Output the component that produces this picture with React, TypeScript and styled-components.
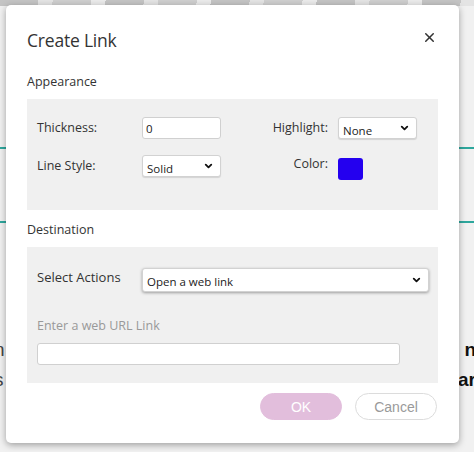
import React from "react";
import styled, { createGlobalStyle } from "styled-components";
import { ChevronDown, X } from "lucide-react";

const GlobalStyle = createGlobalStyle`
  html, body {
    margin: 0;
    padding: 0;
    background: #eeeeee;
  }
  * {
    box-sizing: border-box;
  }
`;

const CreateLinkDialog = () => {
  return (
    <Page>
      <GlobalStyle />
      <Backdrop>
        <TopStripe />
        <TealLine $top={141} />
        <TealLine $top={72} />
        <BackRow $top={117}>
          <BackLetter>n</BackLetter>
          <BackLetter $bold>n</BackLetter>
        </BackRow>
        <BackRow $top={10}>
          <BackLetter>s</BackLetter>
          <BackLetter $bold>ar</BackLetter>
        </BackRow>
      </Backdrop>

      <Dialog>
        <Header>
          <Title>Create Link</Title>
          <CloseButton>
            <X size={15} strokeWidth={2.4} />
          </CloseButton>
        </Header>

        <SectionLabel $top={21}>Appearance</SectionLabel>
        <Panel $pad="18px 21px 33px 10px">
          <AppearanceGrid>
            <Label>Thickness:</Label>
            <TextInput defaultValue="0" $w={79} $h={22} />
            <Label $right>Highlight:</Label>
            <SelectBox $w={79}>
              <Select defaultValue="None">
                <option>None</option>
              </Select>
              <Arrow>
                <ChevronDown size={11} strokeWidth={4} />
              </Arrow>
            </SelectBox>

            <Label>Line Style:</Label>
            <SelectBox $w={79}>
              <Select defaultValue="Solid">
                <option>Solid</option>
              </Select>
              <Arrow>
                <ChevronDown size={11} strokeWidth={4} />
              </Arrow>
            </SelectBox>
            <Label $right $up>Color:</Label>
            <Swatch $color="#2400ef" />
          </AppearanceGrid>
        </Panel>

        <SectionLabel $top={11}>Destination</SectionLabel>
        <Panel $pad="21px 9px 18px 10px">
          <ActionRow>
            <Label $big>Select Actions</Label>
            <SelectBox $w={287} $h={24} $shadow>
              <Select defaultValue="web">
                <option value="web">Open a web link</option>
              </Select>
              <Arrow>
                <ChevronDown size={11} strokeWidth={4} />
              </Arrow>
            </SelectBox>
          </ActionRow>
          <Hint>Enter a web URL Link</Hint>
          <TextInput $w={363} $h={22} />
        </Panel>

        <Footer>
          <PillButton $primary>OK</PillButton>
          <PillButton>Cancel</PillButton>
        </Footer>
      </Dialog>
    </Page>
  );
};

export default CreateLinkDialog;

const Page = styled.div`
  position: relative;
  width: 474px;
  height: 452px;
  overflow: hidden;
  background: #eeeeee;
  font-family: "Open Sans", "Noto Sans", sans-serif;
`;

const Backdrop = styled.div`
  display: flex;
  flex-direction: column;
  width: 100%;
  height: 100%;
  background: #f1f1f1;
`;

const TopStripe = styled.div`
  height: 6px;
  background: repeating-linear-gradient(
    100deg,
    #c4c4c4 0 38px,
    #e4e4e4 38px 52px,
    #cfcfcf 52px 90px,
    #ebebeb 90px 104px
  );
`;

const TealLine = styled.div<{ $top: number }>`
  height: 2px;
  margin-top: ${(p) => p.$top}px;
  background: #2ea79d;
`;

const BackRow = styled.div<{ $top: number }>`
  display: flex;
  justify-content: space-between;
  margin-top: ${(p) => p.$top}px;
  height: 20px;
  font-family: "Liberation Sans", Arial, sans-serif;
  font-size: 19px;
  line-height: 20px;
  color: #1d1d1d;
`;

const BackLetter = styled.span<{ $bold?: boolean }>`
  font-weight: ${(p) => (p.$bold ? 700 : 400)};
  margin-left: ${(p) => (p.$bold ? 0 : -6)}px;
  margin-right: ${(p) => (p.$bold ? -2 : 0)}px;
  color: ${(p) => (p.$bold ? "#111" : "#444")};
`;

const Dialog = styled.div`
  position: absolute;
  left: 6px;
  top: 5px;
  width: 453px;
  height: 438px;
  background: #ffffff;
  border-radius: 5px;
  box-shadow: 0 2px 7px rgba(0, 0, 0, 0.35);
  padding: 23px 21px 0 21px;
  display: flex;
  flex-direction: column;
  color: #333;
`;

const Header = styled.div`
  display: flex;
  align-items: center;
  justify-content: space-between;
  height: 24px;
`;

const Title = styled.h2`
  margin: 0;
  font-size: 17.5px;
  font-weight: 400;
  color: #333;
  letter-spacing: -0.2px;
`;

const CloseButton = styled.span`
  display: flex;
  align-items: center;
  color: #333;
  margin-right: 1px;
  margin-top: -5px;
`;

const SectionLabel = styled.div<{ $top: number }>`
  margin-top: ${(p) => p.$top}px;
  height: 18px;
  line-height: 18px;
  font-size: 12.5px;
  color: #333;
  margin-bottom: 8px;
`;

const Panel = styled.div<{ $pad: string }>`
  width: 411px;
  background: #f0f0f0;
  padding: ${(p) => p.$pad};
  display: flex;
  flex-direction: column;
`;

const AppearanceGrid = styled.div`
  display: grid;
  grid-template-columns: 105px 79px 117px 79px;
  grid-auto-rows: 22px;
  row-gap: 16px;
  align-items: center;
`;

const Label = styled.span<{ $right?: boolean; $up?: boolean; $big?: boolean }>`
  flex: 0 0 105px;
  font-size: ${(p) => (p.$big ? 13 : 12.5)}px;
  line-height: 18px;
  color: #333;
  text-align: ${(p) => (p.$right ? "right" : "left")};
  padding-right: ${(p) => (p.$right ? 10 : 0)}px;
  margin-top: ${(p) => (p.$up ? -4 : 0)}px;
  white-space: nowrap;
`;

const TextInput = styled.input<{ $w: number; $h: number }>`
  width: ${(p) => p.$w}px;
  height: ${(p) => p.$h}px;
  border: 1px solid #d0d0d0;
  border-radius: 3px;
  background: #fff;
  padding: 0 3px;
  font-family: "Open Sans", sans-serif;
  font-size: 11.5px;
  color: #222;
  outline: none;
`;

const SelectBox = styled.div<{ $w: number; $h?: number; $shadow?: boolean }>`
  position: relative;
  flex: 0 0 auto;
  width: ${(p) => p.$w}px;
  height: ${(p) => p.$h ?? 22}px;
  border: 1px solid #d2d2d2;
  border-radius: 3px;
  background: #fff;
  box-shadow: ${(p) =>
    p.$shadow ? "0 1px 3px rgba(0,0,0,0.35)" : "0 1px 1px rgba(0,0,0,0.12)"};
`;

const Select = styled.select`
  appearance: none;
  -webkit-appearance: none;
  width: 100%;
  height: 100%;
  border: none;
  background: transparent;
  padding: 1px 0 0 4px;
  font-family: "Open Sans", sans-serif;
  font-size: 11.5px;
  color: #222;
  outline: none;
`;

const Arrow = styled.span`
  position: absolute;
  right: 6px;
  top: 50%;
  transform: translateY(-50%);
  display: flex;
  color: #111;
  pointer-events: none;
`;

const Swatch = styled.div<{ $color: string }>`
  width: 25px;
  height: 22px;
  border-radius: 3px;
  background: ${(p) => p.$color};
  margin-top: 3px;
  margin-bottom: -3px;
`;

const ActionRow = styled.div`
  display: flex;
  align-items: flex-start;
`;

const Hint = styled.div`
  margin-top: 25px;
  height: 18px;
  line-height: 18px;
  font-size: 12.5px;
  color: #999;
  margin-bottom: 8px;
`;

const Footer = styled.div`
  display: flex;
  justify-content: flex-end;
  gap: 13px;
  margin-top: 10px;
  padding-right: 1px;
`;

const PillButton = styled.button<{ $primary?: boolean }>`
  width: 82px;
  height: 27px;
  border-radius: 14px;
  font-family: "Liberation Sans", Arial, sans-serif;
  font-size: 14px;
  border: 1px solid ${(p) => (p.$primary ? "#e2bedc" : "#dcdcdc")};
  background: ${(p) => (p.$primary ? "#e2bedc" : "#ffffff")};
  color: ${(p) => (p.$primary ? "#ffffff" : "#9a9a9a")};
  cursor: pointer;
`;
